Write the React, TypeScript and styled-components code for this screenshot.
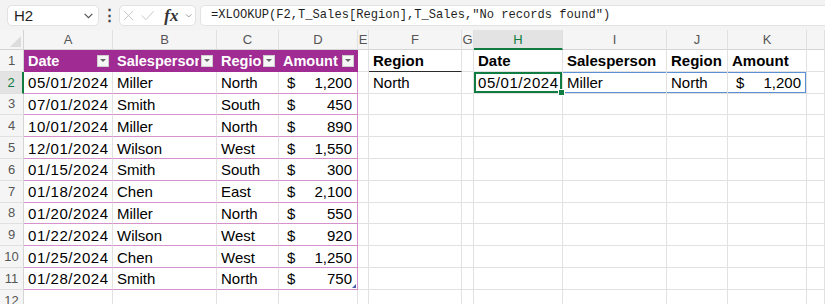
import styled, { createGlobalStyle, css } from 'styled-components';

const GlobalStyle = createGlobalStyle`
  body {
    margin: 0;
    background: #ffffff;
    font-family: "Liberation Sans", Arial, sans-serif;
    overflow: hidden;
  }
`;

const COLS = '24px 89px 104px 62px 79px 11px 93px 12px 89px 104px 61px 79px 1fr';
const GRID = '#e1e1e1';
const PURPLE = '#a02b93';
const PURPLE_LINE = '#d592cc';
const GREEN = '#107c41';
const BLUE = '#5b8fd6';

const Page = styled.div`
  width: 825px;
  height: 304px;
  overflow: hidden;
  background: #ffffff;
`;

const Toolbar = styled.div`
  height: 30px;
  display: flex;
  align-items: center;
  padding-left: 7px;
  background: #f3f3f3;
  box-sizing: border-box;
`;

const NameBox = styled.div`
  width: 92px;
  height: 21px;
  box-sizing: border-box;
  display: flex;
  align-items: center;
  justify-content: space-between;
  padding: 0 4px 0 6px;
  background: #ffffff;
  border: 1px solid #e2e2e2;
  border-radius: 5px;
  font-size: 15px;
  color: #1f1f1f;
`;

const Dots = styled.div`
  width: 20px;
  display: flex;
  justify-content: center;
  font-size: 15px;
  font-weight: bold;
  color: #444;
`;

const FxBox = styled.div`
  width: 77px;
  height: 21px;
  box-sizing: border-box;
  display: flex;
  align-items: center;
  gap: 7px;
  padding: 0 2px 0 3px;
  background: #ffffff;
  border: 1px solid #e2e2e2;
  border-radius: 5px;
`;

const FxLabel = styled.span`
  font-family: "Liberation Serif", "Times New Roman", serif;
  font-style: italic;
  font-weight: bold;
  font-size: 17px;
  line-height: 1;
  color: #333;
  margin-left: 3px;
`;

const FormulaInput = styled.div`
  flex: 1;
  height: 21px;
  box-sizing: border-box;
  margin-left: 4px;
  display: flex;
  align-items: center;
  padding-left: 10px;
  background: #ffffff;
  border: 1px solid #e2e2e2;
  border-right: none;
  border-radius: 5px 0 0 5px;
  font-family: "Liberation Mono", "Courier New", monospace;
  font-size: 12.1px;
  color: #1f1f1f;
  white-space: nowrap;
`;

const Sheet = styled.div`
  display: flex;
  flex-direction: column;
`;

const Row = styled.div<{ $h: number }>`
  display: grid;
  grid-template-columns: ${COLS};
  height: ${(p) => p.$h}px;
`;

const Corner = styled.div`
  position: relative;
  background: #f5f5f5;
  border-right: 1px solid #d4d4d4;
  border-bottom: 1px solid #d4d4d4;
  &::after {
    content: '';
    position: absolute;
    right: 2px;
    bottom: 2px;
    border-left: 11px solid transparent;
    border-bottom: 11px solid #dcdcdc;
  }
`;

const ColHeader = styled.div<{ $active?: boolean }>`
  display: flex;
  align-items: center;
  justify-content: center;
  background: ${(p) => (p.$active ? '#e3e3e3' : '#f5f5f5')};
  color: ${(p) => (p.$active ? GREEN : '#555')};
  font-size: 13px;
  border-right: 1px solid #e0e0e0;
  border-bottom: ${(p) => (p.$active ? `2px solid ${GREEN}` : '1px solid #d4d4d4')};
  box-sizing: border-box;
`;

const RowHeader = styled.div<{ $active?: boolean }>`
  display: flex;
  align-items: center;
  justify-content: center;
  background: ${(p) => (p.$active ? '#e3e3e3' : '#f5f5f5')};
  color: ${(p) => (p.$active ? GREEN : '#555')};
  font-size: 13px;
  border-right: ${(p) => (p.$active ? `2px solid ${GREEN}` : '1px solid #d4d4d4')};
  border-bottom: 1px solid #e0e0e0;
  box-sizing: border-box;
`;

const Cell = styled.div<{ $bold?: boolean; $wide?: boolean }>`
  position: relative;
  display: flex;
  align-items: center;
  padding: 1px 4px 0 4px;
  box-sizing: border-box;
  border-right: 1px solid ${GRID};
  border-bottom: 1px solid ${GRID};
  font-size: 15px;
  font-weight: ${(p) => (p.$bold ? 'bold' : 'normal')};
  letter-spacing: ${(p) => (p.$wide ? '0.55px' : '0')};
  color: #000;
  white-space: nowrap;
  overflow: hidden;
`;

const HeadCell = styled(Cell)`
  background: ${PURPLE};
  color: #ffffff;
  font-weight: bold;
  font-size: 14.5px;
  border-right-color: ${PURPLE};
  border-bottom-color: ${PURPLE};
  padding-right: 3px;
  gap: 2px;
`;

const HeadText = styled.span`
  flex: 1;
  min-width: 0;
  overflow: hidden;
`;

const FilterButton = styled.span`
  flex: none;
  width: 12px;
  height: 12px;
  box-sizing: border-box;
  display: flex;
  align-items: center;
  justify-content: center;
  background: #f6f6f6;
  border: 1px solid #cfcfcf;
  &::after {
    content: '';
    border-left: 3px solid transparent;
    border-right: 3px solid transparent;
    border-top: 3px solid #666;
  }
`;

const TableCell = styled(Cell)<{ $edge?: boolean }>`
  border-bottom-color: ${PURPLE_LINE};
  ${(p) =>
    p.$edge &&
    css`
      border-right-color: ${PURPLE_LINE};
    `}
`;

const Money = styled.span`
  flex: 1;
  display: flex;
  justify-content: space-between;
  padding-left: 4px;
  padding-right: 1px;
`;

const ResizeMark = styled.span`
  position: absolute;
  right: 1px;
  bottom: 1px;
  border-left: 4px solid transparent;
  border-bottom: 4px solid #4a5fae;
`;

const CriteriaHead = styled(Cell)`
  font-weight: bold;
  border-bottom: 1px solid #2b2b2b;
`;

const SpillCell = styled(Cell)<{ $first?: boolean; $last?: boolean; $selected?: boolean }>`
  box-shadow: inset 0 1px 0 ${BLUE}, inset 0 -1px 0 ${BLUE}
    ${(p) => (p.$first ? `, inset 1px 0 0 ${BLUE}` : '')}
    ${(p) => (p.$last ? `, inset -1px 0 0 ${BLUE}` : '')};
  ${(p) =>
    p.$selected &&
    css`
      overflow: visible;
      box-shadow: inset 0 0 0 2px ${GREEN};
    `}
`;

const FillHandle = styled.span`
  position: absolute;
  right: -3px;
  bottom: -3px;
  width: 5px;
  height: 5px;
  background: ${GREEN};
  border: 1px solid #ffffff;
  z-index: 2;
`;

const Chevron = ({ size = 10, color = '#555' }: { size?: number; color?: string }) => (
  <svg width={size} height={size} viewBox="0 0 10 10">
    <path d="M1.5 3.5 L5 7 L8.5 3.5" fill="none" stroke={color} strokeWidth="1.1" />
  </svg>
);

const CrossIcon = () => (
  <svg width="13" height="13" viewBox="0 0 13 13">
    <path d="M1 1 L12 12 M12 1 L1 12" stroke="#c2c2c2" strokeWidth="1.1" fill="none" />
  </svg>
);

const CheckIcon = () => (
  <svg width="16" height="13" viewBox="0 0 16 13">
    <path d="M1 6.5 L5.8 11.5 L15 1.5" stroke="#c2c2c2" strokeWidth="1.1" fill="none" />
  </svg>
);

const LETTERS = ['A', 'B', 'C', 'D', 'E', 'F', 'G', 'H', 'I', 'J', 'K', ''];

const sales = [
  ['05/01/2024', 'Miller', 'North', '1,200'],
  ['07/01/2024', 'Smith', 'South', '450'],
  ['10/01/2024', 'Miller', 'North', '890'],
  ['12/01/2024', 'Wilson', 'West', '1,550'],
  ['01/15/2024', 'Smith', 'South', '300'],
  ['01/18/2024', 'Chen', 'East', '2,100'],
  ['01/20/2024', 'Miller', 'North', '550'],
  ['01/22/2024', 'Wilson', 'West', '920'],
  ['01/25/2024', 'Chen', 'West', '1,250'],
  ['01/28/2024', 'Smith', 'North', '750'],
];

const ROW_H = 21.8;

const Blank = ({ n }: { n: number }) => (
  <>
    {Array.from({ length: n }).map((_, i) => (
      <Cell key={i} />
    ))}
  </>
);

export default function App() {
  return (
    <Page>
      <GlobalStyle />
      <Toolbar>
        <NameBox>
          <span>H2</span>
          <Chevron size={11} />
        </NameBox>
        <Dots>⋮</Dots>
        <FxBox>
          <CrossIcon />
          <CheckIcon />
          <FxLabel>fx</FxLabel>
          <Chevron size={9} color="#888" />
        </FxBox>
        <FormulaInput>=XLOOKUP(F2,T_Sales[Region],T_Sales,"No records found")</FormulaInput>
      </Toolbar>

      <Sheet>
        <Row $h={20}>
          <Corner />
          {LETTERS.map((l, i) => (
            <ColHeader key={i} $active={l === 'H'}>
              {l}
            </ColHeader>
          ))}
        </Row>

        <Row $h={ROW_H}>
          <RowHeader>1</RowHeader>
          {['Date', 'Salesperson', 'Region', 'Amount'].map((h) => (
            <HeadCell key={h}>
              <HeadText>{h}</HeadText>
              <FilterButton />
            </HeadCell>
          ))}
          <Cell />
          <CriteriaHead>Region</CriteriaHead>
          <Cell />
          <Cell $bold>Date</Cell>
          <Cell $bold>Salesperson</Cell>
          <Cell $bold>Region</Cell>
          <Cell $bold>Amount</Cell>
          <Cell />
        </Row>

        {sales.map((r, i) => (
          <Row key={i} $h={ROW_H}>
            <RowHeader $active={i === 0}>{i + 2}</RowHeader>
            <TableCell $wide>{r[0]}</TableCell>
            <TableCell>{r[1]}</TableCell>
            <TableCell>{r[2]}</TableCell>
            <TableCell $edge>
              <Money>
                <span>$</span>
                <span>{r[3]}</span>
              </Money>
              {i === sales.length - 1 && <ResizeMark />}
            </TableCell>
            {i === 0 ? (
              <>
                <Cell />
                <Cell>North</Cell>
                <Cell />
                <SpillCell $selected $wide>
                  05/01/2024
                  <FillHandle />
                </SpillCell>
                <SpillCell>Miller</SpillCell>
                <SpillCell>North</SpillCell>
                <SpillCell $last>
                  <Money>
                    <span>$</span>
                    <span>1,200</span>
                  </Money>
                </SpillCell>
                <Cell />
              </>
            ) : (
              <Blank n={8} />
            )}
          </Row>
        ))}

        <Row $h={ROW_H}>
          <RowHeader>12</RowHeader>
          <Blank n={12} />
        </Row>
      </Sheet>
    </Page>
  );
}
